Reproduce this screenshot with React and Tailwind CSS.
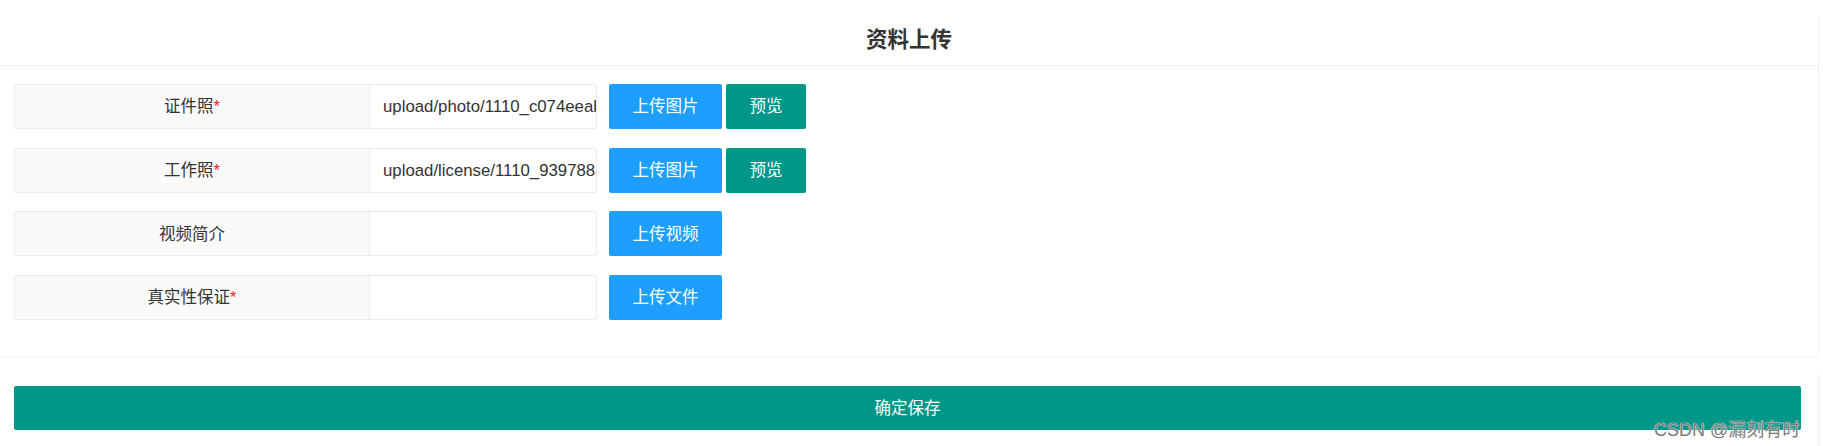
import React from "react";

const FONT = { fontFamily: '"Liberation Sans", Arial, "Noto Sans CJK SC", sans-serif' };

function Row({ label, required, value, uploadText, preview }) {
  return (
    <div className="flex items-stretch h-[45px]">
      <div className="w-[356px] flex items-center justify-center bg-[#fafafa] border border-[#ebebeb] rounded-l-[2px] text-[16.5px] text-[#333]">
        <span>{label}</span>
        {required && <span className="text-[#ff2020]">*</span>}
      </div>
      <div className="w-[227px] flex items-center bg-white border border-l-0 border-[#ebebeb] rounded-r-[2px] pl-[13px]">
        <span className="block w-full overflow-hidden whitespace-nowrap text-[16.8px] text-[#333]">{value}</span>
      </div>
      <button className="ml-[12px] w-[113px] bg-[#1e9fff] text-white text-[16.5px] rounded-[2px]">
        {uploadText}
      </button>
      {preview && (
        <button className="ml-[4px] w-[80px] bg-[#009688] text-white text-[16.5px] rounded-[2px]">
          预览
        </button>
      )}
    </div>
  );
}

export default function App() {
  return (
    <div className="relative w-[1823px] h-[446px] bg-white overflow-hidden pt-[16px]" style={FONT}>
      <div className="w-[1819px] border-r border-[#f2f2f2] shadow-[0_1px_2px_0_rgba(0,0,0,0.05)]">
        <div className="h-[50px] flex items-center justify-center border-b border-[#f0f0f0]">
          <span className="text-[21.5px] font-bold text-[#333]">资料上传</span>
        </div>
        <div className="pt-[18px] pb-[36px] pl-[14px] flex flex-col gap-[18.7px]">
          <Row label="证件照" required value="upload/photo/1110_c074eeab5f2d8e91.jpg" uploadText="上传图片" preview />
          <Row label="工作照" required value="upload/license/1110_939788a2c4d1.jpg" uploadText="上传图片" preview />
          <Row label="视频简介" value="" uploadText="上传视频" />
          <Row label="真实性保证" required value="" uploadText="上传文件" />
        </div>
      </div>
      <div className="mt-[17px] w-[1819px] h-[80px] border-r border-[#f2f2f2] pt-[13px] pl-[14px]">
        <button className="w-[1787px] h-[44px] bg-[#009688] text-white text-[16.5px] rounded-[2px]">
          确定保存
        </button>
      </div>
      <div
        className="absolute left-[1654px] top-[417px] text-[18px] text-[#7a7a7a] whitespace-nowrap"
        style={{ textShadow: "0 0 1px #fff, 0 0 1px #fff" }}
      >
        CSDN @漏刻有时
      </div>
    </div>
  );
}
